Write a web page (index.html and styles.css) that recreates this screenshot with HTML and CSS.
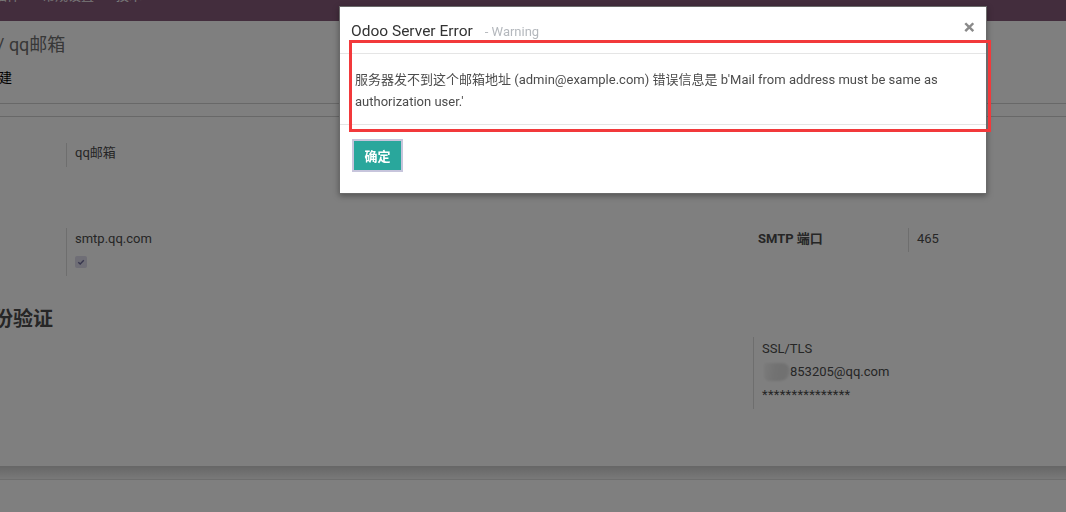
FILE: index.html
```html
<!DOCTYPE html>
<html lang="zh-CN">
<head>
<meta charset="utf-8">
<title>Odoo Server Error</title>
<link rel="stylesheet" href="styles.css">
</head>
<body>
<div class="page">
  <div class="navbar">
    <div class="menu">
      <span class="menu-item first">插件</span>
      <span class="menu-item">常规设置</span>
      <span class="menu-item">技术</span>
    </div>
  </div>
  <div class="cpanel">
    <div class="breadcrumb">/ qq邮箱</div>
    <div class="buttons">创建</div>
  </div>
  <div class="statusbar"></div>
  <div class="sheet">
    <div class="row row1">
      <div class="label-left"></div>
      <div class="value-left">qq邮箱</div>
    </div>
    <div class="row row2">
      <div class="label-left"></div>
      <div class="value-left tall">
        <div>smtp.qq.com</div>
        <div class="checkbox">
          <svg viewBox="0 0 12 12" width="12" height="12"><path d="M3.3 6.2 L5.2 8 L8.8 4.2" fill="none" stroke="#6f6d9a" stroke-width="1.4"/></svg>
        </div>
      </div>
      <div class="label-right">SMTP 端口</div>
      <div class="value-right">465</div>
    </div>
    <h2 class="section">身份验证</h2>
    <div class="row row3">
      <div class="spacer3"></div>
      <div class="value-col">
        <div class="line">SSL/TLS</div>
        <div class="line"><span class="blur"></span><span class="mail">853205@qq.com</span></div>
        <div class="stars">***************</div>
      </div>
    </div>
  </div>
  <div class="sheet-shadow"></div>
</div>

<div class="backdrop"></div>

<div class="modal">
  <div class="modal-header">
    <span class="modal-title">Odoo Server Error</span>
    <span class="modal-sub">- Warning</span>
    <span class="close">×</span>
  </div>
  <div class="modal-body">服务器发不到这个邮箱地址 (admin@example.com) 错误信息是 b'Mail from address must be same as authorization user.'</div>
  <div class="modal-footer">
    <button class="btn-primary">确定</button>
  </div>
</div>

<div class="highlight"></div>
</body>
</html>
```

FILE: styles.css
```css
html, body {
  margin: 0;
  padding: 0;
}
body {
  width: 1066px;
  height: 512px;
  overflow: hidden;
  font-family: Roboto, "Noto Sans CJK SC", sans-serif;
  font-size: 13px;
  color: #4c4c4c;
  background: #ffffff;
}
.page {
  width: 1066px;
}
.navbar {
  height: 21px;
  background: #875a7b;
  overflow: hidden;
}
.menu {
  margin-top: -13px;
  display: flex;
  color: #f0f0f0;
  font-size: 13px;
  line-height: 18px;
}
.menu-item {
  margin-right: 22px;
}
.menu-item.first {
  margin-left: -6px;
}
.cpanel {
  height: 83px;
  border-bottom: 1px solid #d0d0d0;
  box-sizing: border-box;
}
.breadcrumb {
  padding-top: 12px;
  margin-left: -3px;
  font-size: 18px;
  line-height: 24px;
  color: #707070;
}
.buttons {
  margin-top: 12px;
  margin-left: -14px;
  font-size: 13px;
  line-height: 18px;
  color: #000;
}
.statusbar {
  height: 13px;
  border-bottom: 1px solid #d0d0d0;
  box-sizing: border-box;
}
.sheet {
  height: 349px;
  box-sizing: border-box;
  padding-top: 26px;
}
.row {
  display: flex;
}
.label-left {
  width: 66px;
  flex: none;
}
.value-left {
  width: 682px;
  flex: none;
  border-left: 1px solid #dcdcdc;
  padding-left: 8px;
  box-sizing: border-box;
  height: 24px;
  line-height: 20px;
}
.value-left.tall {
  height: 48px;
  padding-top: 1px;
}
.row2 {
  margin-top: 61px;
}
.checkbox {
  width: 12px;
  height: 12px;
  margin-top: 7px;
  border-radius: 2px;
  background: #dedced;
  display: flex;
}
.label-right {
  width: 160px;
  flex: none;
  padding-left: 10px;
  padding-top: 1px;
  box-sizing: border-box;
  font-weight: bold;
  line-height: 20px;
  color: #4c4c4c;
}
.value-right {
  border-left: 1px solid #dcdcdc;
  padding-left: 8px;
  padding-top: 1px;
  height: 24px;
  box-sizing: border-box;
  line-height: 20px;
}
.section {
  margin: 31px 0 0 -27px;
  font-size: 20px;
  line-height: 24px;
  font-weight: bold;
  color: #4c4c4c;
}
.row3 {
  margin-top: 6px;
}
.spacer3 {
  width: 753px;
  flex: none;
}
.value-col {
  border-left: 1px solid #dcdcdc;
  padding-left: 8px;
  height: 72px;
  padding-top: 0;
  box-sizing: border-box;
}
.line {
  line-height: 23px;
  display: flex;
  align-items: center;
}
.blur {
  display: inline-block;
  width: 26px;
  height: 18px;
  margin-left: 2px;
  background: linear-gradient(100deg, #f6f6f6 0%, #e4e4e4 45%, #e2e2e2 80%, #f2f2f2 100%);
  border-radius: 2px 10px 12px 6px;
  filter: blur(1px);
}
.stars {
  font-size: 13px;
  line-height: 20px;
  letter-spacing: 0.3px;
  margin-top: 2px;
}
.sheet-shadow {
  height: 13px;
  background: linear-gradient(#cdcdcd, #f2f2f2);
  border-bottom: 1px solid #dcdcdc;
}

.backdrop {
  position: fixed;
  inset: 0;
  background: rgba(0, 0, 0, 0.5);
}

.modal {
  position: absolute;
  left: 339px;
  top: 6px;
  width: 648px;
  box-sizing: border-box;
  background: #fff;
  border: 1px solid #6a6a6a;
  box-shadow: 0 2px 6px rgba(0, 0, 0, 0.35);
}
.modal-header {
  display: flex;
  align-items: baseline;
  padding: 12px 15px 11px 11px;
  border-bottom: 1px solid #e5e5e5;
}
.modal-title {
  font-size: 15.5px;
  line-height: 22px;
  color: #333;
}
.modal-sub {
  margin-left: 12px;
  font-size: 13px;
  color: #b4b8bd;
}
.close {
  margin-left: auto;
  font-size: 21px;
  font-weight: bold;
  line-height: 20px;
  color: #8a8a8a;
  margin-right: -4px;
  position: relative;
  top: -2px;
}
.modal-body {
  padding: 15px 15px 12px 15px;
  line-height: 22px;
  font-size: 13px;
  color: #4c4c4c;
  height: 70px;
  box-sizing: border-box;
}
.modal-footer {
  border-top: 1px solid #e5e5e5;
  padding: 14px 12px 21px 12px;
  display: flex;
}
.btn-primary {
  width: 51px;
  height: 33px;
  background: #29a79c;
  color: #fff;
  border: 2px solid #c7c5dc;
  font-family: Roboto, "Noto Sans CJK SC", sans-serif;
  font-size: 13px;
  font-weight: bold;
  padding: 0;
}

.highlight {
  position: absolute;
  left: 349px;
  top: 40px;
  width: 642px;
  height: 92px;
  box-sizing: border-box;
  border: 3px solid #f2393b;
}
```
